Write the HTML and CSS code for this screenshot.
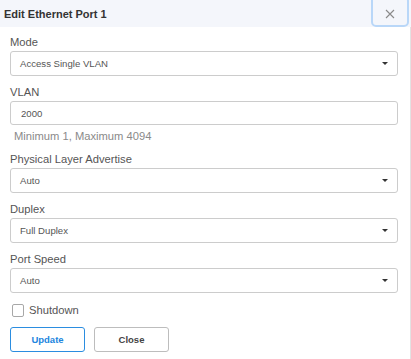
FILE: index.html
```html
<!DOCTYPE html>
<html>
<head>
<meta charset="utf-8">
<link rel="stylesheet" href="styles.css">
</head>
<body>
<div class="modal">
  <div class="header">
    <div class="title">Edit Ethernet Port 1</div>
    <button class="close-x" aria-label="Close">
      <svg width="10" height="10" viewBox="0 0 10 10"><path d="M1 1L9 9M9 1L1 9" stroke="#8a8a8a" stroke-width="1.1" fill="none"/></svg>
    </button>
  </div>
  <div class="content">
    <div class="group">
      <div class="label">Mode</div>
      <div class="select"><span>Access Single VLAN</span><i class="caret"></i></div>
    </div>
    <div class="group tight">
      <div class="label">VLAN</div>
      <div class="input">2000</div>
      <div class="help">Minimum 1, Maximum 4094</div>
    </div>
    <div class="group">
      <div class="label">Physical Layer Advertise</div>
      <div class="select"><span>Auto</span><i class="caret"></i></div>
    </div>
    <div class="group">
      <div class="label">Duplex</div>
      <div class="select"><span>Full Duplex</span><i class="caret"></i></div>
    </div>
    <div class="group">
      <div class="label">Port Speed</div>
      <div class="select"><span>Auto</span><i class="caret"></i></div>
    </div>
    <div class="check-row">
      <span class="checkbox"></span>
      <span class="check-label">Shutdown</span>
    </div>
    <div class="actions">
      <button class="btn primary">Update</button>
      <button class="btn">Close</button>
    </div>
  </div>
</div>
</body>
</html>
```

FILE: styles.css
```css
* { box-sizing: border-box; }
html, body { margin: 0; padding: 0; background: #fff; }
body { font-family: "Liberation Sans", Arial, sans-serif; color: #555; }
.modal { width: 411px; height: 359px; overflow: hidden; }
.header {
  height: 27px;
  background: #f4f6fb;
  display: flex;
  align-items: center;
  padding-left: 4px;
}
.title { font-size: 11px; font-weight: bold; color: #333; }
.close-x {
  margin-left: auto;
  margin-right: 2px;
  margin-top: -4px;
  width: 38px;
  height: 31px;
  border: 2px solid #b9d7f8;
  border-radius: 5px;
  background: #f4f6fb;
  display: flex;
  align-items: center;
  justify-content: center;
  padding: 4px 0 0 0;
}
.content {
  width: 411px;
  height: 332px;
  border-right: 1px solid #e2e2e2;
  padding: 8px 0 0 10px;
}
.group { width: 388px; margin-bottom: 9px; }
.label { font-size: 11.2px; line-height: 14px; margin-bottom: 2px; color: #555; }
.select, .input {
  height: 25px;
  border: 1px solid #cccccc;
  border-radius: 3px;
  display: flex;
  align-items: center;
  padding: 0 9px 0 9px;
  font-size: 9.6px;
  color: #555;
  background: #fff;
}
.input { height: 24px; padding-left: 10px; }
.caret {
  margin-left: auto;
  width: 0; height: 0;
  border-left: 3px solid transparent;
  border-right: 3px solid transparent;
  border-top: 3px solid #333;
}
.help { font-size: 11.2px; line-height: 14px; color: #8a8a8a; margin-top: 4px; padding-left: 4px; }
.check-row { display: flex; align-items: center; height: 14px; margin-top: 10px; padding-left: 2px; }
.checkbox { width: 12px; height: 13px; border: 1px solid #a8a8a8; border-radius: 2px; background: #fff; }
.check-label { font-size: 11.2px; margin-left: 5px; color: #555; }
.actions { display: flex; gap: 9px; margin-top: 10px; }
.btn {
  width: 75px; height: 25px;
  border: 1px solid #bdbdbd;
  border-radius: 3px;
  background: #fff;
  font-family: "Liberation Sans", Arial, sans-serif;
  font-size: 9.5px;
  font-weight: bold;
  color: #444;
  padding: 0;
}
.btn.primary { border-color: #2b8de0; color: #2285de; }
```
